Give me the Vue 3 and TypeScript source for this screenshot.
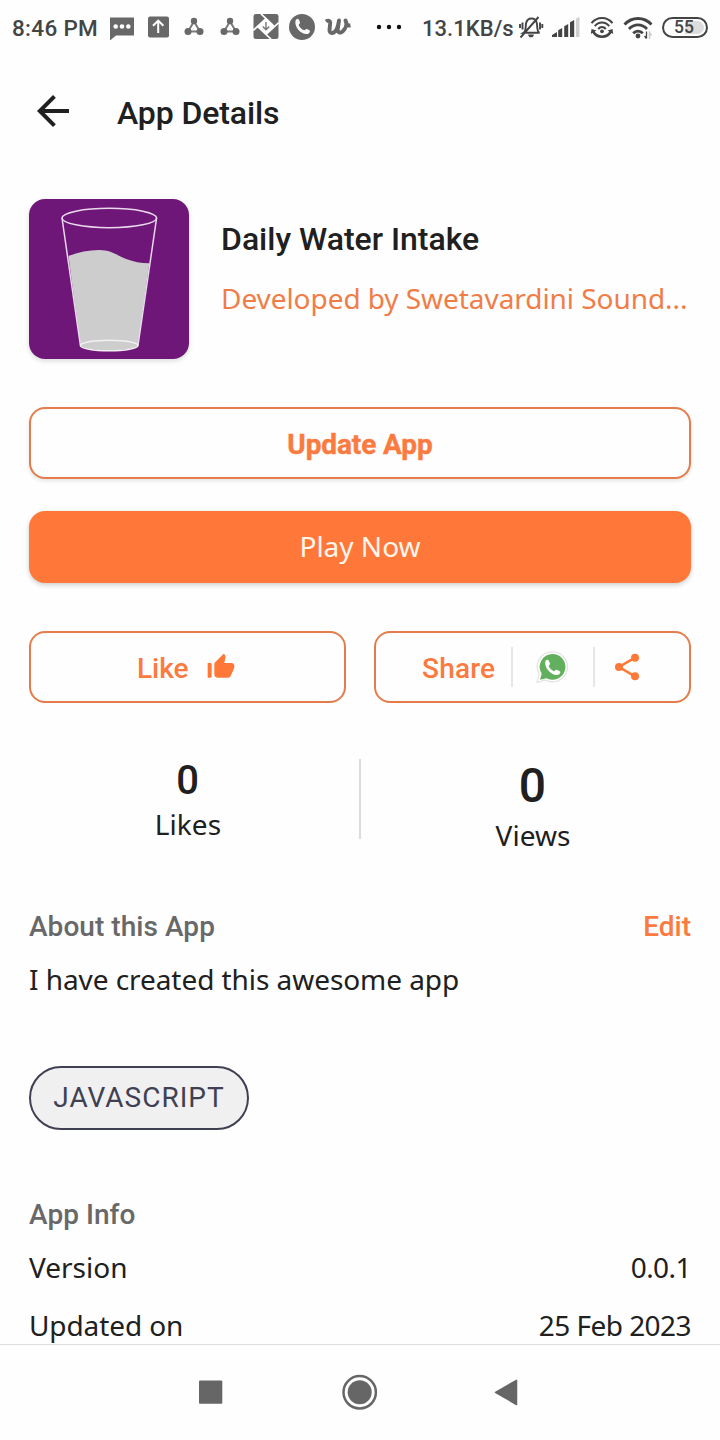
<script setup lang="ts">
interface InfoRow {
  label: string
  value: string
}

const info: InfoRow[] = [
  { label: 'Version', value: '0.0.1' },
  { label: 'Updated on', value: '25 Feb 2023' },
]
</script>

<template>
  <div class="screen">
    <header class="status">
      <span class="clock">8:46 PM</span>
      <div class="notices">
        <svg viewBox="0 0 26 28"><path fill="#686868" d="M1 5.500h24v18H7l-6 5z" /><g fill="#fefefe"><circle cx="6.700" cy="14.500" r="2.300" /><circle cx="13" cy="14.500" r="2.300" /><circle cx="19.300" cy="14.500" r="2.300" /></g></svg>
        <svg viewBox="0 0 26 28"><rect x="3" y="4.500" width="21" height="21" rx="2" fill="#686868" /><path d="M13.200 21V9.500M8 13.800l5.200-5.200 5.200 5.200" fill="none" stroke="#fefefe" stroke-width="2" /></svg>
        <svg v-for="n in 2" :key="n" viewBox="0 0 26 28"><path d="M13 9.500 7 19.500h12z" fill="none" stroke="#7a7a7a" stroke-width="2" /><g fill="#686868"><circle cx="13" cy="9" r="3.200" /><circle cx="7" cy="19.500" r="3.500" /><circle cx="19" cy="19.500" r="3.500" /></g></svg>
        <svg viewBox="0 0 26 28"><rect x=".5" y="2" width="25" height="25" rx="2.500" fill="#686868" /><path d="M13 6.500 21.500 14.500 13 22.500 4.500 14.500z" fill="#fefefe" /><path d="M8 1.800 22 15M25.800 10.500 12.500 23M18 27.200 4 14M.2 18.500 13.500 6" stroke="#fefefe" stroke-width="1.700" /><path d="M13 10v7.500M9.800 14.500l3.200 3.200 3.200-3.200" fill="none" stroke="#777" stroke-width="1.400" /></svg>
        <svg viewBox="0 0 26 28"><circle cx="13" cy="15" r="13" fill="#686868" /><path d="M6.500 8.700c.7-1.200 1.700-2 2.600-1.800.9.300 1.700 2.700 1.900 3.700.2.900-1.300 1.700-1.200 2.300.7 2.400 3 4.700 5.400 5.300.8.200 1.400-1.500 2.300-1.300 1.100.2 3.200 1.300 3.500 2.100.2 1-1.100 2.400-2.300 2.900C12.500 23 5.200 15.500 6.500 8.700z" fill="#fefefe" /></svg>
        <svg viewBox="0 0 26 28"><path d="M1 9.500c2-1.500 4.500-1 4.200 1.500l-.7 7c0 3 3 4 5.500 1.500 2-2 3-5 4-11l-1.300 9c0 3.500 3.200 4 5.300 1.500 2.800-2.700 4.300-7 2.500-10.500.5 3 2 5.500 5 5" fill="none" stroke="#686868" stroke-width="3.900" stroke-linejoin="round" /></svg>
      </div>
      <svg class="dots" viewBox="0 0 26 6"><g fill="#111"><circle cx="3" cy="3" r="2.200" /><circle cx="13" cy="3" r="2.200" /><circle cx="23" cy="3" r="2.200" /></g></svg>
      <span class="speed">13.1KB/s</span>
      <svg class="bell" viewBox="0 0 26 26"><g fill="none" stroke="#444" stroke-width="1.900"><path d="M5.500 18.800c2.700-1.500 2-6 2.500-9.300.7-3.500 3-5 5.500-5s4.800 1.500 5.400 5c.5 3.300-.2 7.800 2.600 9.300zM2.500 23.500 20.500 3" /><path d="M4.500 8.500v7M2 10v4M22 8.500v7M24.300 10v4" /></g><path d="M10 20.500h6c-.5 2-1.500 2.800-3 2.800s-2.500-.8-3-2.800z" fill="#444" /></svg>
      <svg class="signal" viewBox="0 0 28 20"><path d="M0 20v-2l5-3v5zM6.200 20v-6.700l4-2.200V20zM12.200 20V9.300l4-2.200V20zM18 20V5.300l4.200-2.200V20z" fill="#444" /><path d="M23.900 20V1.500L27.500 0v20z" fill="#cfcfcf" /></svg>
      <svg class="hotspot" viewBox="0 0 24 24"><g fill="none" stroke="#444" stroke-width="2"><path d="M1.500 8.200c5.500-6.900 15.500-6.900 21 0M4.800 11.200c4-4.900 10.400-4.900 14.400 0M8.200 14c2.200-2.700 5.400-2.700 7.600 0" /><path d="M3 16.500c4.500 7 13.500 7 18 0" stroke-width="2.600" /></g><path d="M.8 19 1.500 14l5 1.500zM23.200 19l-.7-5-5 1.500z" fill="#444" /><circle cx="12" cy="16.300" r="1.900" fill="#444" /></svg>
      <svg class="wifi" viewBox="0 0 30 24"><g fill="none" stroke="#444" stroke-width="2.800"><path d="M1.500 8.500c7.500-8 19.500-8 27 0M6 13c5-5.400 13-5.400 18 0M10.200 17.300c2.700-2.900 6.900-2.900 9.600 0" /></g><circle cx="15" cy="20" r="2.400" fill="#444" /><path d="M23.500 15.500v7M21.500 20l2 2.500" stroke="#444" stroke-width="1.300" fill="none" /><path d="M26.500 23v-6.500l2 3" stroke="#ccc" stroke-width="1.500" fill="none" /></svg>
      <div class="battery"><span class="charge">55</span></div>
    </header>

    <nav class="appbar">
      <svg class="back" viewBox="0 0 24 24"><path d="M20 11H7.830l5.590-5.590L12 4l-8 8 8 8 1.410-1.410L7.830 13H20v-2z" fill="#202020" /></svg>
      <h1>App Details</h1>
    </nav>

    <main>
      <section class="hero">
        <svg class="logo" viewBox="0 0 160 160">
          <rect width="160" height="160" fill="#6f1778" />
          <path d="M39.500 57C49 53 60 51 70 51C89 51 91 63.500 120.300 64.300L109 147C101 153 60 153 51.500 147z" fill="#cdcdcd" />
          <g fill="none" stroke="#e9d9ec" stroke-width="1.500">
            <ellipse cx="80.300" cy="19" rx="47.300" ry="9.700" />
            <path d="M33 19 51.400 146.500M127.600 19 109 146.500" />
            <ellipse cx="80.200" cy="146.500" rx="28.800" ry="5.200" stroke="#f2f0f2" />
          </g>
        </svg>
        <div class="heading">
          <h2>Daily Water Intake</h2>
          <p>Developed by Swetavardini Sound...</p>
        </div>
      </section>

      <button class="btn update"><span>Update App</span></button>
      <button class="btn play"><span>Play Now</span></button>

      <div class="pair actions">
        <button class="btn like">
          <span>Like</span>
          <svg viewBox="0 0 24 24"><path fill="#ff7838" d="M2 20h2c.55 0 1-.45 1-1v-9c0-.55-.45-1-1-1H2v11zm19.830-7.120c.11-.25.17-.52.17-.8V11c0-1.100-.9-2-2-2h-5.500l.92-4.650c.05-.22.02-.46-.08-.66-.23-.45-.52-.86-.88-1.220L14 2 7.590 8.410C7.210 8.790 7 9.300 7 9.830v7.840C7 18.950 8.050 20 9.340 20h8.110c.7 0 1.360-.37 1.720-.97l2.660-6.150z" /></svg>
        </button>
        <div class="btn share">
          <span>Share</span>
          <i class="sep"></i>
          <svg class="whatsapp" viewBox="0 0 32 32"><path d="M16.500.8a15 15 0 1 1-7.100 28.200L1 31.300l2.200-8.200A15 15 0 0 1 16.500.8z" fill="#fff" stroke="#e3e3e3" stroke-width="1.200" /><path d="M16.500 3a12.900 12.900 0 1 1-6.200 24.200L4 28.800l1.700-6A12.900 12.900 0 0 1 16.500 3z" fill="#62b05d" /><path d="M9.500 9.800c.8-1.200 2-1.500 2.900-.6.700.8 1.700 3 1.600 3.700-.1.900-1.500 1.700-1.300 2.400 1.100 2.300 3 4 5.200 4.900.8.200 1.500-1.600 2.300-1.500 1 .1 3.700 1.400 4.100 2 .5 1.200-1.200 3-2.600 3.300C15.700 25 7.500 16.700 9.500 9.800z" fill="#fff" /></svg>
          <i class="sep"></i>
          <svg class="link" viewBox="0 0 24 24"><path d="M18 5 6 12l12 7" fill="none" stroke="#ff7838" stroke-width="1.900" /><g fill="#ff7838"><circle cx="18" cy="5" r="3" /><circle cx="6" cy="12" r="3" /><circle cx="18" cy="19" r="3" /></g></svg>
        </div>
      </div>

      <section class="stats">
        <div class="stat likes"><strong>0</strong><span>Likes</span></div>
        <i class="rule"></i>
        <div class="stat views"><strong>0</strong><span>Views</span></div>
      </section>

      <section class="about">
        <div class="row"><h3>About this App</h3><a>Edit</a></div>
        <p>I have created this awesome app</p>
        <span class="chip">JAVASCRIPT</span>
      </section>

      <section class="info">
        <h3>App Info</h3>
        <div v-for="item in info" :key="item.label" class="row entry">
          <span class="label">{{ item.label }}</span><span class="value">{{ item.value }}</span>
        </div>
      </section>
    </main>

    <footer class="navbar">
      <svg viewBox="0 0 36 36"><rect x="6" y="6.500" width="23.300" height="23.300" rx="1" fill="#666" /></svg>
      <svg viewBox="0 0 36 36"><circle cx="17.700" cy="18.300" r="16.200" fill="none" stroke="#666" stroke-width="2.500" /><circle cx="17.700" cy="18.300" r="12" fill="#666" /></svg>
      <svg viewBox="0 0 36 36"><path d="M25.500 6.300v24.200L4.500 18.400z" fill="#666" stroke="#666" stroke-width="1.500" stroke-linejoin="round" /></svg>
    </footer>
  </div>
</template>

<style scoped>
.screen {
  width: 720px;
  height: 1440px;
  display: flex;
  flex-direction: column;
  overflow: hidden;
  background: #fefefe;
  color: #202020;
  font-family: Roboto, "Liberation Sans", sans-serif;
  font-size: 28px;
}
h1, h2, h3, p { margin: 0; font-weight: 500; }
svg { display: block; flex: none; }

.status {
  height: 54px;
  display: flex;
  align-items: center;
  padding-left: 12px;
  color: #444;
  font-weight: 500;
  flex: none;
}
.clock { width: 97px; font-size: 22.5px; white-space: nowrap; margin-top: 1px; letter-spacing: 0.3px; }
.notices { display: flex; gap: 10px; }
.notices svg { width: 26px; height: 28px; margin-top: -3px; }
.dots { width: 26px; height: 6px; margin-left: 25px; }
.speed { width: 97px; font-size: 22px; margin-left: 20px; margin-top: 3px; letter-spacing: 0.05px; white-space: nowrap; }
.bell { width: 26px; height: 26px; margin-left: -1px; }
.signal { width: 28px; height: 20px; margin-left: 8px; margin-top: -1px; }
.hotspot { width: 24px; height: 24px; margin-left: 10px; }
.wifi { width: 30px; height: 24px; margin: 1px 0 0 8.5px; }
.battery {
  width: 46px;
  height: 21px;
  box-sizing: border-box;
  border: 2px solid #444;
  border-radius: 11px;
  margin-left: 9.5px;
  padding: 2px;
  display: flex;
}
.charge {
  flex: 1;
  padding-right: 2px;
  border-radius: 8px;
  background: linear-gradient(90deg, transparent 50%, #ddd 50%);
  text-align: center;
  font-size: 17.5px;
  line-height: 12px;
}

.appbar { height: 114px; display: flex; align-items: center; padding-left: 29px; flex: none; }
.back { width: 48px; height: 48px; }
h1 { margin: 4px 0 0 40px; font-size: 32px; letter-spacing: -0.1px; }

main { flex: 1; min-height: 0; overflow: hidden; padding: 31px 29px 0; display: flex; flex-direction: column; }
.hero { display: flex; height: 160px; flex: none; }
.logo { width: 160px; height: 160px; border-radius: 16px; box-shadow: 0 2px 5px rgba(0, 0, 0, 0.14); }
.heading { padding: 16px 0 0 32px; display: flex; flex-direction: column; gap: 11px; white-space: nowrap; }
h2 { font-size: 32px; line-height: 48px; letter-spacing: -0.01px; }
.heading p { font: 400 28px/48px "Noto Sans", sans-serif; letter-spacing: -0.06px; color: #f07d48; }

.btn {
  display: flex;
  align-items: center;
  justify-content: center;
  flex: none;
  height: 72px;
  box-sizing: border-box;
  padding: 0;
  border: 2px solid #e67b4b;
  border-radius: 16px;
  background: #fefefe;
  color: #fa7a40;
  font: 500 28px/40px Roboto, sans-serif;
}
.update {
  margin-top: 48px;
  font-weight: 700;
  letter-spacing: -0.1px;
  -webkit-text-stroke: 0.4px #fa7a40;
  box-shadow: 0 2px 4px rgba(0, 0, 0, 0.1);
}
.update span, .like span, .share span { margin-top: 3px; }
.play {
  margin-top: 32px;
  padding-bottom: 2px;
  border: 0;
  background: #ff7839;
  color: #fff7ec;
  font: 400 28px/40px "Noto Sans", sans-serif;
  box-shadow: 0 2px 5px rgba(0, 0, 0, 0.2);
}
.pair { display: grid; grid-template-columns: 317px 317px; column-gap: 28px; }
.actions { margin-top: 48px; flex: none; }
.like { justify-content: flex-start; padding-left: 106px; }
.like span { width: 68px; text-align: left; }
.like svg { width: 32px; height: 32px; }
.share { justify-content: flex-start; padding-left: 46px; }
.share span { width: 89px; letter-spacing: 0.2px; }
.sep { width: 2px; height: 40px; background: #e6e6e6; flex: none; }
.whatsapp { width: 32px; height: 32px; margin: 0 25px 0 23px; }
.link { width: 32px; height: 32px; margin-left: 16px; }

.stats { display: flex; margin-top: 48px; height: 98px; flex: none; justify-content: space-between; }
.stat { width: 317px; display: flex; flex-direction: column; text-align: center; }
.stat strong { font-weight: 500; }
.stat span { font-family: "Noto Sans", sans-serif; letter-spacing: 0.05px; padding-left: 1px; }
.likes strong { font-size: 40px; line-height: 60px; }
.likes span { line-height: 26px; }
.views strong { font-size: 48px; line-height: 70px; }
.views span { line-height: 28px; }
.rule { width: 2px; height: 80px; margin-top: 8px; background: #dcdcdc; }

.row { display: flex; justify-content: space-between; line-height: 40px; }
h3 { font-size: 28px; line-height: 40px; color: #686868; letter-spacing: 0.05px; }
.about { margin-top: 58px; flex: none; }
.about a { color: #fa7a40; font-weight: 500; }
.about p { margin-top: 12px; font: 400 28px/40px "Noto Sans", sans-serif; letter-spacing: -0.06px; }
.chip {
  display: flex;
  justify-content: center;
  align-items: center;
  width: 220px;
  height: 64px;
  box-sizing: border-box;
  padding-bottom: 2px;
  margin-top: 67px;
  border: 2px solid #3f4152;
  border-radius: 32px;
  background: #f0f0f0;
  color: #3f4152;
  letter-spacing: 1px;
}
.info { margin-top: 65px; flex: none; }
.entry { margin-top: 12px; font-family: "Noto Sans", sans-serif; }
.entry + .entry { margin-top: 18px; }
.entry + .entry .label { letter-spacing: -0.1px; }
.value { letter-spacing: -0.55px; }

.navbar {
  height: 96px;
  box-sizing: border-box;
  flex: none;
  border-top: 1px solid #dfdfdf;
  display: flex;
  justify-content: center;
  align-items: center;
  gap: 113px;
  padding: 0 1px 2px 0;
}
.navbar svg { width: 36px; height: 36px; }
</style>

<style>
body { margin: 0; background: #fefefe; }
</style>
